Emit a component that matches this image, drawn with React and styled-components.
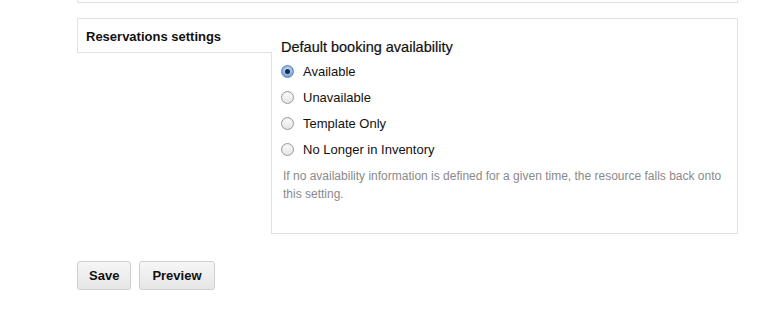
import React from 'react'
import styled, { createGlobalStyle } from 'styled-components'

const Global = createGlobalStyle`
  body {
    margin: 0;
    background: #fff;
    font-family: "Liberation Sans", Arial, sans-serif;
    color: #111;
  }
`

const Page = styled.div`
  width: 661px;
  margin-left: 77px;
`

const TopBox = styled.div`
  height: 2px;
  border: 1px solid #e2e2e2;
  border-top: none;
  margin-bottom: 15px;
`

const Tabs = styled.div`
  display: flex;
  border-top: 1px solid #e2e2e2;
  border-right: 1px solid #e2e2e2;
  height: 215px;
`

const TabList = styled.div`
  width: 194px;
  flex: none;
`

const Tab = styled.div`
  height: 34px;
  box-sizing: border-box;
  padding: 10px 0 0 8px;
  border-left: 1px solid #e2e2e2;
  border-bottom: 1px solid #e2e2e2;
  font-size: 13px;
  font-weight: bold;
`

const Panel = styled.div`
  flex: 1;
  margin-top: 33px;
  border-left: 1px solid #e2e2e2;
  border-bottom: 1px solid #e2e2e2;
  padding: 0 10px 0 9px;
`

const Legend = styled.div`
  font-size: 14.5px;
  margin-top: -13px;
  margin-bottom: 2px;
  line-height: 17px;
  -webkit-text-stroke: 0.2px #111;
`

const Option = styled.label`
  display: flex;
  align-items: center;
  height: 26px;
  font-size: 13px;
  cursor: pointer;
`

const Radio = styled.span`
  width: 13px;
  height: 13px;
  border-radius: 50%;
  box-sizing: border-box;
  margin-right: 9px;
  display: flex;
  align-items: center;
  justify-content: center;
  border: 1px solid ${p => (p.checked ? '#5a86c4' : '#9a9a9a')};
  background: ${p =>
    p.checked
      ? 'radial-gradient(circle at 50% 35%, #d6e6fa 0%, #87aee6 60%, #5b8ad0 100%)'
      : 'linear-gradient(#fdfdfd, #e4e4e4)'};
  box-shadow: inset 0 1px 1px rgba(0, 0, 0, 0.08);
  &::after {
    content: '';
    display: ${p => (p.checked ? 'block' : 'none')};
    width: 5px;
    height: 5px;
    border-radius: 50%;
    background: #1d2b44;
  }
`

const Help = styled.p`
  margin: 5px 0 0 2px;
  font-size: 12px;
  line-height: 18px;
  color: #8a8a8a;
`

const Actions = styled.div`
  display: flex;
  gap: 8px;
  margin-top: 27px;
`

const Button = styled.button`
  height: 29px;
  padding: 0 ${p => p.$pad}px;
  font-family: "Liberation Sans", Arial, sans-serif;
  font-size: 13px;
  font-weight: bold;
  color: #111;
  border: 1px solid #cfcfcf;
  border-radius: 3px;
  background: linear-gradient(#f6f6f6, #e6e6e6);
  box-shadow: 0 1px 1px rgba(0, 0, 0, 0.06);
`

const options = ['Available', 'Unavailable', 'Template Only', 'No Longer in Inventory']

export default function App() {
  return (
    <Page>
      <Global />
      <TopBox />
      <Tabs>
        <TabList>
          <Tab>Reservations settings</Tab>
        </TabList>
        <Panel>
          <Legend>Default booking availability</Legend>
          {options.map((o, i) => (
            <Option key={o}>
              <Radio checked={i === 0} />
              {o}
            </Option>
          ))}
          <Help>
            If no availability information is defined for a given time, the resource falls back onto
            this setting.
          </Help>
        </Panel>
      </Tabs>
      <Actions>
        <Button $pad={11}>Save</Button>
        <Button $pad={12}>Preview</Button>
      </Actions>
    </Page>
  )
}
